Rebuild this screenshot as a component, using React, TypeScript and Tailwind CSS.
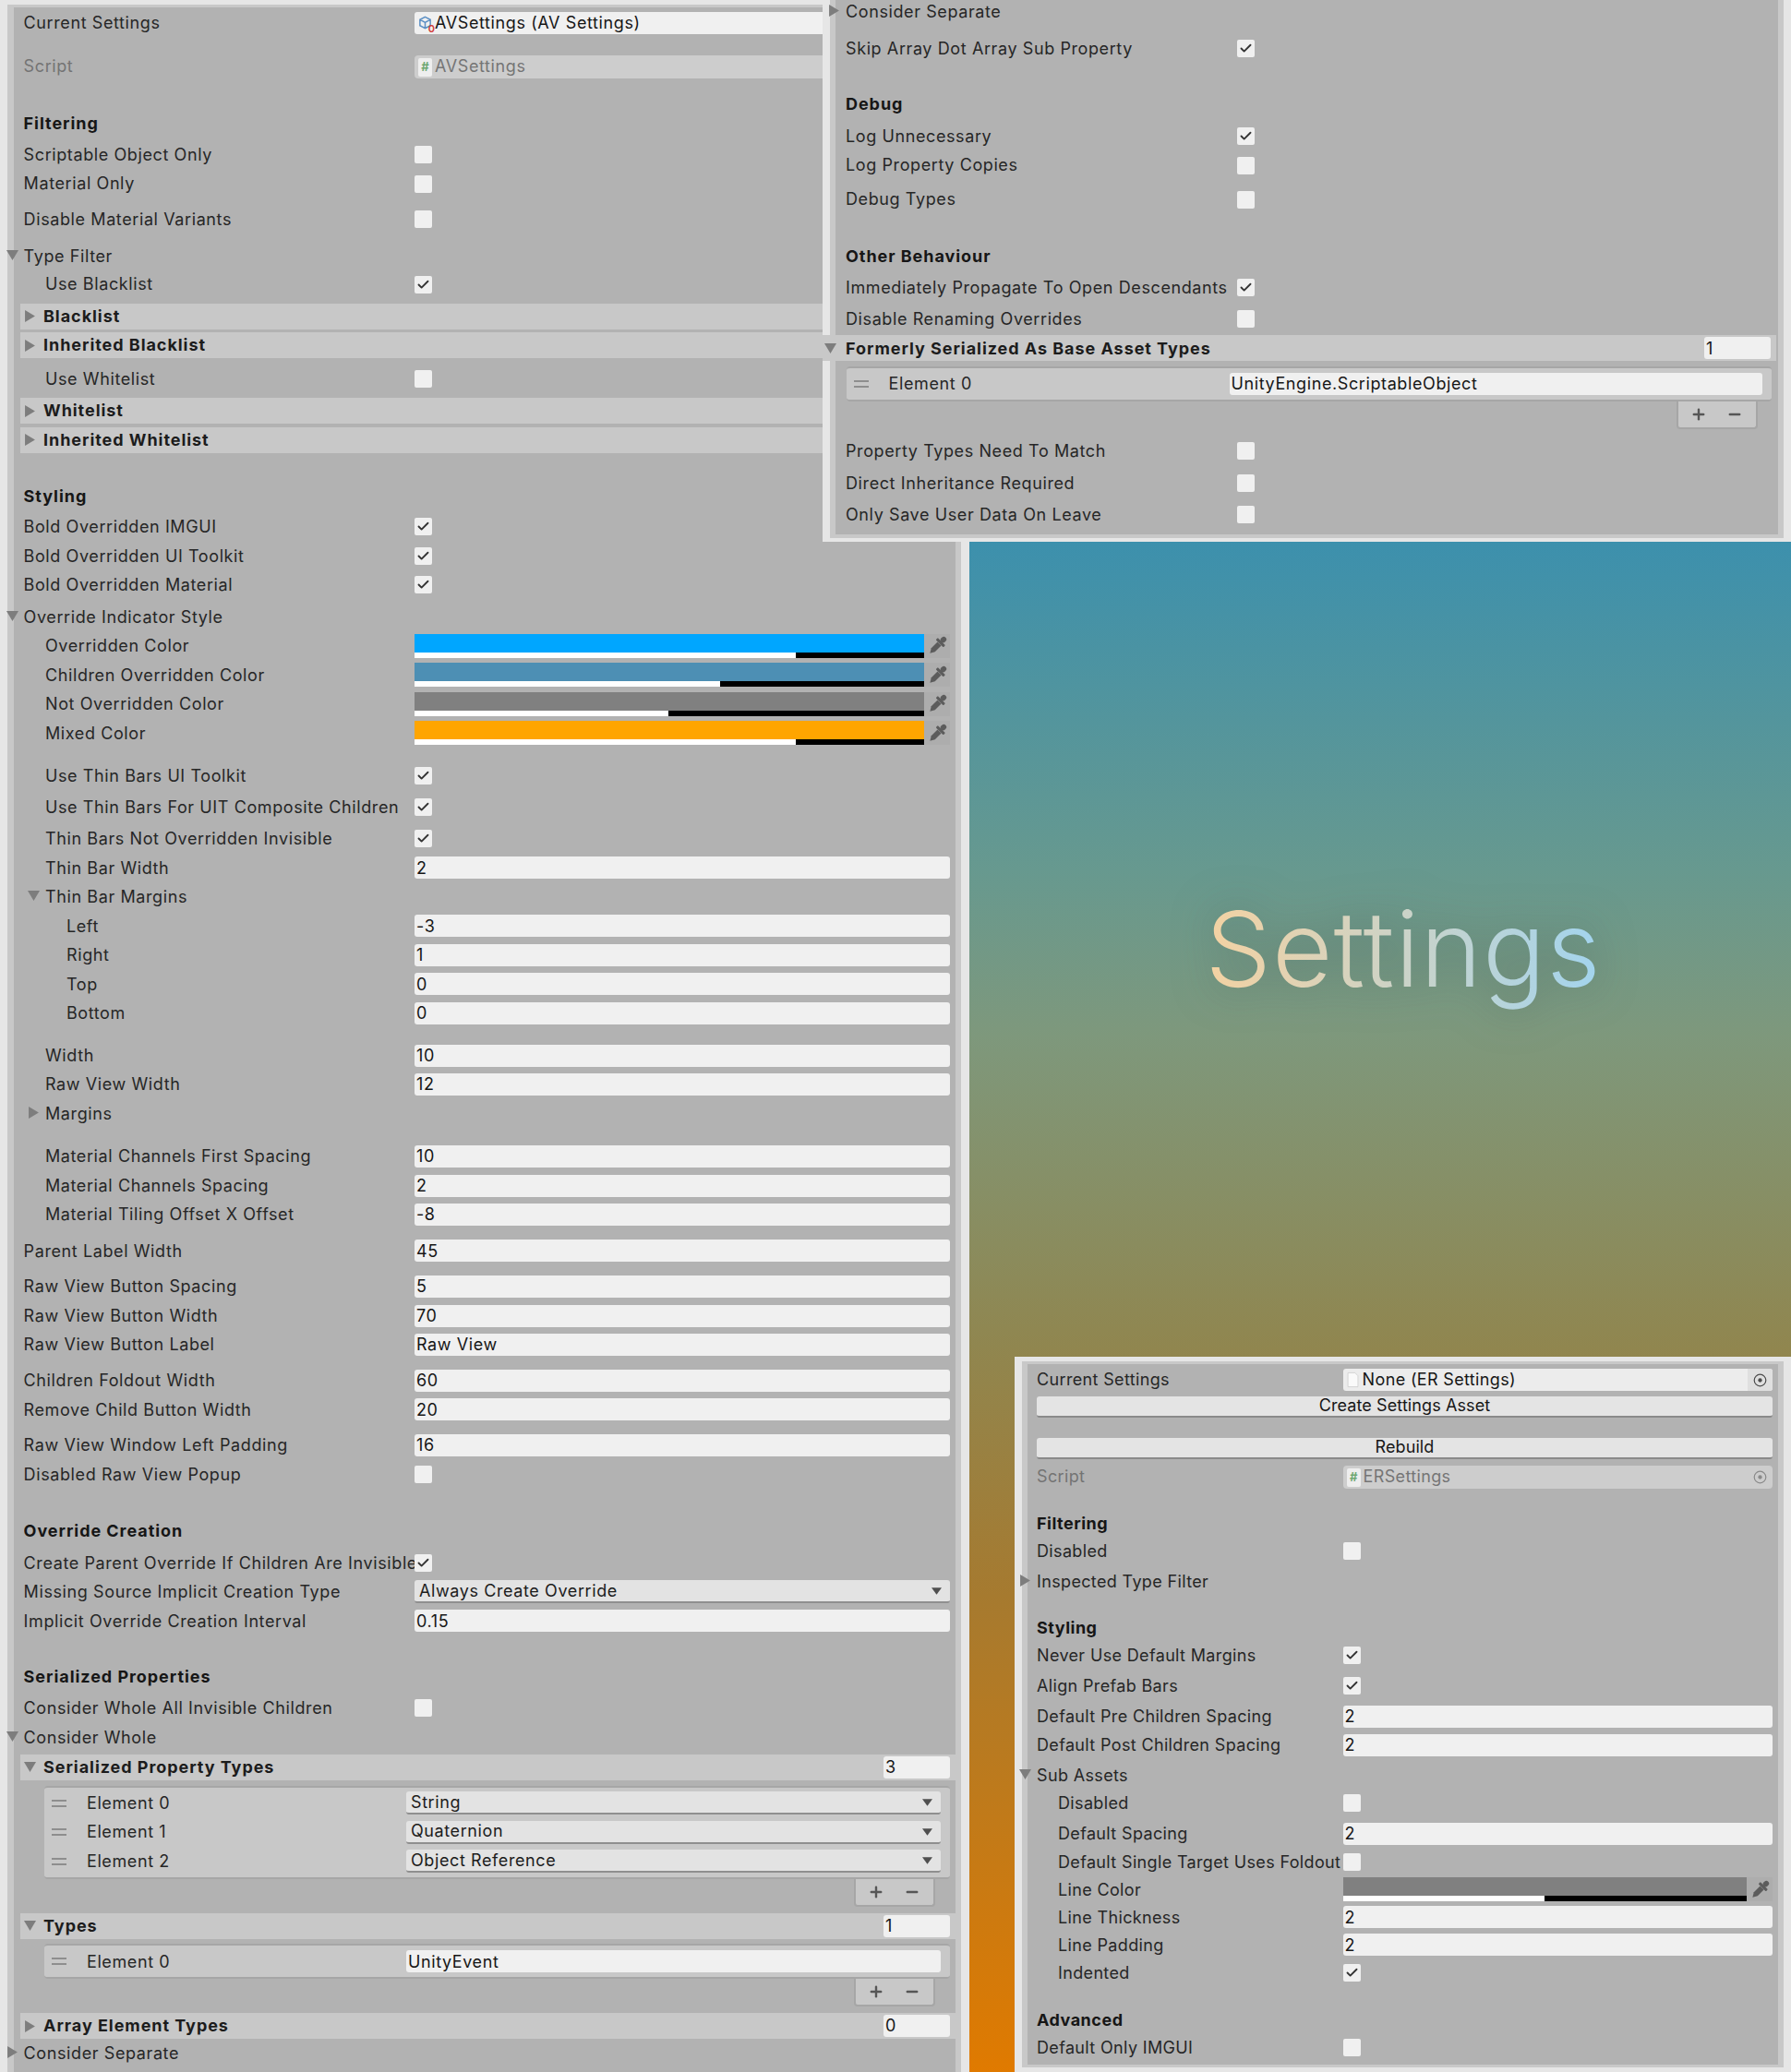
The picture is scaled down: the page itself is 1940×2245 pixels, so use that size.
import type { ReactNode } from "react";
import { Check, Minus, Plus } from "lucide-react";

function Triangle({ open, className = "" }: { open?: boolean; className?: string }) {
  return (
    <svg viewBox="0 0 12 12" className={`h-[13px] w-[13px] shrink-0 fill-[#7d7d7d] ${className}`}>
      {open ? <path d="M0 1h12L6 11z" /> : <path d="M1 0v12l10-6z" />}
    </svg>
  );
}

function Row({ label, indent = "", bold, dim, className = "", children }: { label: ReactNode; indent?: string; bold?: boolean; dim?: boolean; className?: string; children?: ReactNode }) {
  return (
    <div className={`flex h-[30px] shrink-0 items-center ${className}`}>
      <div className={`w-[var(--lw)] shrink-0 overflow-hidden pt-[1px] whitespace-nowrap ${indent} ${bold ? "font-bold tracking-[var(--tb)] text-[#161616]" : dim ? "text-[#747474]" : "text-[#262626]"}`}>
        {label}
      </div>
      <div className="flex min-w-0 flex-1 items-center">{children}</div>
    </div>
  );
}

function Foldout({ label, open, indent = "", className = "" }: { label: string; open?: boolean; indent?: string; className?: string }) {
  return (
    <div className={`flex h-[30px] shrink-0 items-center pt-[1px] text-[#262626] ${indent} ${className}`}>
      <span className="relative whitespace-nowrap">
        <Triangle open={open} className="absolute top-[3px] -left-[19px]" />
        {label}
      </span>
    </div>
  );
}

function Box({ checked }: { checked?: boolean }) {
  return (
    <span className="grid h-[19px] w-[19px] place-items-center rounded-[2px] bg-[#f0f0f0]">
      {checked && <Check className="h-[15px] w-[15px] text-[#333333]" strokeWidth={3} />}
    </span>
  );
}

function Field({ value }: { value: string }) {
  return (
    <div className="flex h-[24px] w-full items-center overflow-hidden rounded-[3px] bg-[#f0f0f0] pt-[1px] pl-[2px] whitespace-nowrap text-[#161616]">
      {value}
    </div>
  );
}

function Drop({ value }: { value: string }) {
  return (
    <div className="flex h-[25px] w-full items-center justify-between rounded-[3px] border-b-2 border-[#8f8f8f] bg-[#e3e3e3] pt-[1px] pr-[9px] pl-[5px] text-[#1c1c1c]">
      {value}
      <svg viewBox="0 0 12 8" className="h-[8px] w-[11px] fill-[#4f4f4f]">
        <path d="M0 0h12L6 8z" />
      </svg>
    </div>
  );
}

function Dropper() {
  return (
    <svg viewBox="0 0 24 24" className="h-[23px] w-[23px] fill-[#5c5c5c]">
      <g transform="rotate(45 12 12)">
        <rect x="9" y="-1" width="6" height="7" rx="3" />
        <rect x="6" y="5.5" width="12" height="3.2" rx="1" />
        <path d="M9 9h6v10l-3 5-3-5z" />
      </g>
    </svg>
  );
}

function ColorField({ color, white }: { color: string; white: string }) {
  return (
    <div className="flex w-full items-center">
      <div className="flex h-[26px] min-w-0 flex-1 flex-col">
        <div className={`h-[20px] ${color}`} />
        <div className="flex h-[6px] bg-black">
          <div className={`bg-white ${white}`} />
        </div>
      </div>
      <div className="grid h-[26px] w-[28px] shrink-0 place-items-center bg-[#adadad]">
        <Dropper />
      </div>
    </div>
  );
}

function HashIcon() {
  return (
    <span className="mr-[3px] grid h-[20px] w-[15px] shrink-0 place-items-center rounded-[2px] bg-[#eeeeee] text-[13px] font-bold tracking-normal text-[#6fa873]">#</span>
  );
}

function Target({ dim }: { dim?: boolean }) {
  return (
    <span className={`grid h-full w-[27px] shrink-0 place-items-center ${dim ? "" : "bg-[#dfdfdf]"}`}>
      <svg viewBox="0 0 16 16" className={`h-[15px] w-[15px] ${dim ? "fill-[#8a8a8a] stroke-[#8a8a8a]" : "fill-[#4c4c4c] stroke-[#4c4c4c]"}`}>
        <circle cx="8" cy="8" r="6.7" fill="none" strokeWidth="1.3" />
        <circle cx="8" cy="8" r="2.3" stroke="none" />
      </svg>
    </span>
  );
}

function ScriptField({ value, target }: { value: string; target?: boolean }) {
  return (
    <div className="flex h-[25px] w-full items-center overflow-hidden rounded-[4px] bg-[#cdcdcd] pt-[1px] pl-[4px] whitespace-nowrap text-[#757575]">
      <HashIcon />
      <span className="flex-1">{value}</span>
      {target && <Target dim />}
    </div>
  );
}

function Header({ label, open, count, indent, className = "" }: { label: string; open?: boolean; count?: string; indent?: boolean; className?: string }) {
  return (
    <div className={`flex h-[30px] shrink-0 items-center ${className}`}>
      <div className={`flex h-[28px] w-full items-center bg-[#c8c8c8] pr-[6px] ${indent ? "pl-[2px]" : "pl-[4px]"}`}>
        <Triangle open={open} />
        <span className={`flex-1 pt-[1px] font-bold tracking-[var(--tb)] whitespace-nowrap text-[#1c1c1c] ${indent ? "ml-[10px]" : "ml-[8px]"}`}>{label}</span>
        {count !== undefined && (
          <div className="w-[72px] shrink-0">
            <Field value={count} />
          </div>
        )}
      </div>
    </div>
  );
}

function ListBox({ labelW, labels, pad, children }: { labelW: string; labels: string[]; pad: string; children: ReactNode[] }) {
  return (
    <div className={`flex flex-col gap-[1.5px] rounded-[4px] border-y-2 border-[#a6a6a6] bg-[#c8c8c8] py-[2px] ${pad}`}>
      {labels.map((label, i) => (
        <div key={i} className="flex h-[30px] items-center">
          <span className="flex h-[8px] w-[16px] shrink-0 flex-col justify-between">
            <span className="h-[2px] bg-[#8e8e8e]" />
            <span className="h-[2px] bg-[#8e8e8e]" />
          </span>
          <span className={`ml-[22px] shrink-0 pt-[1px] text-[#262626] ${labelW}`}>{label}</span>
          <div className="min-w-0 flex-1">{children[i]}</div>
        </div>
      ))}
    </div>
  );
}

function ListFooter({ className = "" }: { className?: string }) {
  return (
    <div className={`-mt-[1.5px] flex h-[30px] w-[88px] items-center gap-[21px] rounded-b-[4px] border-x-2 border-b-2 border-[#a6a6a6] bg-[#c8c8c8] pl-[13px] text-[#565656] ${className}`}>
      <Plus className="h-[18px] w-[18px]" strokeWidth={3.2} />
      <Minus className="h-[18px] w-[18px]" strokeWidth={3.2} />
    </div>
  );
}

function LeftWindow() {
  return (
    <div className="absolute top-0 left-0 flex h-[2245px] w-[1050px] flex-col bg-[#e6e6e6] pt-[5px] pr-[9px] pl-[8px]">
      <div className="flex flex-1 flex-col bg-[#c8c8c8] pt-[3px] pr-[6px] pl-[7px]">
        <div className="flex flex-1 flex-col gap-[1.5px] bg-[#b2b2b2] pt-[2px] pr-[6px] pl-[10.6px] [--lw:423.4px]">
          <Row label="Current Settings">
            <div className="flex h-[24px] w-full items-center overflow-hidden rounded-[3px] bg-[#f0f0f0] pt-[1px] pl-[4px] whitespace-nowrap text-[#161616]">
              <span className="relative mr-[3px] h-[17px] w-[15px] shrink-0">
                <svg viewBox="0 0 16 16" className="h-[15px] w-[15px] fill-none stroke-[#5b8fc4] stroke-[1.6]">
                  <path d="M8 1.5 14 4.5v7L8 14.5 2 11.5v-7zM2 4.5 8 8l6-3.5M8 8v6.5" />
                </svg>
                <span className="absolute right-[-3px] bottom-[-3px] text-[11px] leading-none font-semibold tracking-normal text-[#d23b3b]">0</span>
              </span>
              AVSettings (AV Settings)
            </div>
          </Row>
          <Row label="Script" dim className="mt-[15.5px]"><ScriptField value="AVSettings" /></Row>
          <Row label="Filtering" bold className="mt-[30px]" />
          <Row label="Scriptable Object Only" className="mt-[2.5px]"><Box /></Row>
          <Row label="Material Only"><Box /></Row>
          <Row label="Disable Material Variants" className="mt-[7px]"><Box /></Row>
          <Foldout label="Type Filter" open className="mt-[8.5px]" />
          <Row label="Use Blacklist" indent="pl-[23.4px]" className="-mt-[1px]"><Box checked /></Row>
          <Header label="Blacklist" className="mt-[3px] -mr-[6px] -ml-[3.6px]" />
          <Header label="Inherited Blacklist" className="-mr-[6px] -ml-[3.6px]" />
          <Row label="Use Whitelist" indent="pl-[23.4px]" className="mt-[5px]"><Box /></Row>
          <Header label="Whitelist" className="mt-[3px] -mr-[6px] -ml-[3.6px]" />
          <Header label="Inherited Whitelist" className="-mr-[6px] -ml-[3.6px]" />

          <Row label="Styling" bold className="mt-[29.3px]" />
          <Row label="Bold Overridden IMGUI" className="mt-[2px]"><Box checked /></Row>
          <Row label="Bold Overridden UI Toolkit"><Box checked /></Row>
          <Row label="Bold Overridden Material"><Box checked /></Row>
          <Foldout label="Override Indicator Style" open className="mt-[3px]" />
          <Row label="Overridden Color" indent="pl-[23.4px]"><ColorField color="bg-[#00a6ff]" white="w-[413px]" /></Row>
          <Row label="Children Overridden Color" indent="pl-[23.4px]"><ColorField color="bg-[#4d8fb4]" white="w-[331px]" /></Row>
          <Row label="Not Overridden Color" indent="pl-[23.4px]"><ColorField color="bg-[#808080]" white="w-[275px]" /></Row>
          <Row label="Mixed Color" indent="pl-[23.4px]"><ColorField color="bg-[#ffa500]" white="w-[413px]" /></Row>
          <Row label="Use Thin Bars UI Toolkit" indent="pl-[23.4px]" className="mt-[15px]"><Box checked /></Row>
          <Row label="Use Thin Bars For UIT Composite Children" indent="pl-[23.4px]" className="mt-[2.2px]"><Box checked /></Row>
          <Row label="Thin Bars Not Overridden Invisible" indent="pl-[23.4px]" className="mt-[2.8px]"><Box checked /></Row>
          <Row label="Thin Bar Width" indent="pl-[23.4px]"><Field value="2" /></Row>
          <Foldout label="Thin Bar Margins" open indent="pl-[23.4px]" />
          <Row label="Left" indent="pl-[46.4px]"><Field value="-3" /></Row>
          <Row label="Right" indent="pl-[46.4px]"><Field value="1" /></Row>
          <Row label="Top" indent="pl-[46.4px]"><Field value="0" /></Row>
          <Row label="Bottom" indent="pl-[46.4px]"><Field value="0" /></Row>
          <Row label="Width" indent="pl-[23.4px]" className="mt-[14.3px]"><Field value="10" /></Row>
          <Row label="Raw View Width" indent="pl-[23.4px]"><Field value="12" /></Row>
          <Foldout label="Margins" indent="pl-[23.4px]" />
          <Row label="Material Channels First Spacing" indent="pl-[23.4px]" className="mt-[15px]"><Field value="10" /></Row>
          <Row label="Material Channels Spacing" indent="pl-[23.4px]"><Field value="2" /></Row>
          <Row label="Material Tiling Offset X Offset" indent="pl-[23.4px]"><Field value="-8" /></Row>
          <Row label="Parent Label Width" className="mt-[7.9px]"><Field value="45" /></Row>
          <Row label="Raw View Button Spacing" className="mt-[7.2px]"><Field value="5" /></Row>
          <Row label="Raw View Button Width"><Field value="70" /></Row>
          <Row label="Raw View Button Label"><Field value="Raw View" /></Row>
          <Row label="Children Foldout Width" className="mt-[7.1px]"><Field value="60" /></Row>
          <Row label="Remove Child Button Width"><Field value="20" /></Row>
          <Row label="Raw View Window Left Padding" className="mt-[7.2px]"><Field value="16" /></Row>
          <Row label="Disabled Raw View Popup"><Box /></Row>

          <Row label="Override Creation" bold className="mt-[30px]" />
          <Row label="Create Parent Override If Children Are Invisible" className="mt-[2.9px]"><Box checked /></Row>
          <Row label="Missing Source Implicit Creation Type"><Drop value="Always Create Override" /></Row>
          <Row label="Implicit Override Creation Interval"><Field value="0.15" /></Row>

          <Row label="Serialized Properties" bold className="mt-[28.6px]" />
          <Row label="Consider Whole All Invisible Children" className="mt-[2.9px]"><Box /></Row>
          <Foldout label="Consider Whole" open />
          <Header label="Serialized Property Types" open count="3" className="mt-[1px] -mr-[6px] -ml-[3.6px]" />
          <ListBox labelW="w-[346px]" pad="mt-[3.2px] pr-[10px] pl-[8px] ml-[22.4px]" labels={["Element 0", "Element 1", "Element 2"]}>
            {[<Drop key="0" value="String" />, <Drop key="1" value="Quaternion" />, <Drop key="2" value="Object Reference" />]}
          </ListBox>
          <ListFooter className="ml-[899.4px]" />
          <Header label="Types" open count="1" className="mt-[4.8px] -mr-[6px] -ml-[3.6px]" />
          <ListBox labelW="w-[346px]" pad="mt-[3.2px] pr-[10px] pl-[8px] ml-[22.4px]" labels={["Element 0"]}>
            {[<Field key="0" value="UnityEvent" />]}
          </ListBox>
          <ListFooter className="ml-[899.4px]" />
          <Header label="Array Element Types" count="0" className="mt-[4.2px] -mr-[6px] -ml-[3.6px]" />
          <Foldout label="Consider Separate" className="-mt-[1.5px]" />
        </div>
      </div>
    </div>
  );
}

function TopRightWindow() {
  return (
    <div className="absolute top-0 left-[891px] flex h-[587px] w-[1049px] flex-col bg-[#e6e6e6] pr-[8px] pb-[4px] pl-[8px]">
      <div className="flex flex-1 flex-col bg-[#c8c8c8] pr-[6px] pb-[4px] pl-[6px]">
        <div className="flex flex-1 flex-col gap-[1.5px] bg-[#b2b2b2] pr-[7px] pl-[11px] [--lw:424px]">
          <Foldout label="Consider Separate" className="-mt-[2.3px]" />
          <Row label="Skip Array Dot Array Sub Property" className="mt-[8.5px]"><Box checked /></Row>
          <Row label="Debug" bold className="mt-[28.8px]" />
          <Row label="Log Unnecessary" className="mt-[3px]"><Box checked /></Row>
          <Row label="Log Property Copies"><Box /></Row>
          <Row label="Debug Types" className="mt-[5.7px]"><Box /></Row>
          <Row label="Other Behaviour" bold className="mt-[30px]" />
          <Row label="Immediately Propagate To Open Descendants" className="mt-[2.8px]"><Box checked /></Row>
          <Row label="Disable Renaming Overrides" className="mt-[2.5px]"><Box /></Row>
          <div className="relative z-10 -mr-[5px] -ml-[25px]">
            <Header label="Formerly Serialized As Base Asset Types" open count="1" indent />
          </div>
          <ListBox labelW="w-[369px]" pad="mt-[2.8px] pr-[10px] pl-[8px] ml-[0.6px]" labels={["Element 0"]}>
            {[<Field key="0" value="UnityEngine.ScriptableObject" />]}
          </ListBox>
          <ListFooter className="ml-[900px]" />
          <Row label="Property Types Need To Match" className="mt-[7.5px]"><Box /></Row>
          <Row label="Direct Inheritance Required" className="mt-[3.2px]"><Box /></Row>
          <Row label="Only Save User Data On Leave" className="mt-[2.8px]"><Box /></Row>
        </div>
      </div>
    </div>
  );
}

function UnityButton({ label, className = "" }: { label: string; className?: string }) {
  return (
    <div className={`flex h-[23px] shrink-0 items-center justify-center rounded-[3px] border-b-2 border-[#8a8a8a] bg-[#e4e4e4] tracking-[0.1px] text-[#161616] ${className}`}>
      {label}
    </div>
  );
}

function BottomRightWindow() {
  return (
    <div className="absolute top-[1470px] left-[1099px] flex h-[775px] w-[841px] flex-col bg-[#e6e6e6] pt-[5px] pr-[8px] pb-[5px] pl-[8px] tracking-[0.35px] [--tb:0.5px]">
      <div className="flex flex-1 flex-col bg-[#c8c8c8] pt-[3px] pr-[6px] pb-[3px] pl-[6px]">
        <div className="flex flex-1 flex-col bg-[#b2b2b2] pt-[2px] pr-[6px] pl-[10px] [--lw:331.6px]">
          <Row label="Current Settings">
            <div className="flex h-[24px] w-full items-center overflow-hidden rounded-[3px] bg-[#ececec] pl-[4px] text-[#161616]">
              <svg viewBox="0 0 12 16" className="mr-[4px] h-[18px] w-[13px] fill-[#fafafa] stroke-[#c4c4c4] stroke-[0.6]">
                <path d="M1 1h7l3 3v11H1z" />
              </svg>
              <span className="flex-1 pt-[1px]">None (ER Settings)</span>
              <Target />
            </div>
          </Row>
          <UnityButton label="Create Settings Asset" className="mt-[3px]" />
          <UnityButton label="Rebuild" className="mt-[22px]" />
          <Row label="Script" dim className="mt-[4px]"><ScriptField value="ERSettings" target /></Row>
          <Row label="Filtering" bold className="mt-[20.7px]" />
          <Row label="Disabled"><Box /></Row>
          <Foldout label="Inspected Type Filter" className="mt-[3.3px]" />
          <Row label="Styling" bold className="mt-[19.8px]" />
          <Row label="Never Use Default Margins"><Box checked /></Row>
          <Row label="Align Prefab Bars" className="mt-[3px]"><Box checked /></Row>
          <Row label="Default Pre Children Spacing" className="mt-[3px]"><Field value="2" /></Row>
          <Row label="Default Post Children Spacing" className="mt-[1px]"><Field value="2" /></Row>
          <Foldout label="Sub Assets" open className="mt-[3px]" />
          <Row label="Disabled" indent="pl-[23px]"><Box /></Row>
          <Row label="Default Spacing" indent="pl-[23px]" className="mt-[3px]"><Field value="2" /></Row>
          <Row label="Default Single Target Uses Foldout" indent="pl-[23px]" className="mt-[0.7px]"><Box /></Row>
          <Row label="Line Color" indent="pl-[23px]"><ColorField color="bg-[#808080]" white="w-[218px]" /></Row>
          <Row label="Line Thickness" indent="pl-[23px]"><Field value="2" /></Row>
          <Row label="Line Padding" indent="pl-[23px]"><Field value="2" /></Row>
          <Row label="Indented" indent="pl-[23px]"><Box checked /></Row>
          <Row label="Advanced" bold className="mt-[21px]" />
          <Row label="Default Only IMGUI"><Box /></Row>
        </div>
      </div>
    </div>
  );
}

export default function App() {
  return (
    <div className="relative h-[2245px] w-[1940px] overflow-hidden bg-[linear-gradient(180deg,#3c90ad_26%,#67998f_42%,#7e987c_50%,#90864f_65%,#a67a2f_77%,#e07a00_100%)] text-[18px] leading-[1.25] tracking-[0.6px] [--tb:0.95px] [font-family:Inter,'Liberation_Sans',sans-serif]">
      <div className="absolute top-[953px] left-[1290px] w-[460px] text-center text-[113px] leading-[150px] font-[350] tracking-[1px] [filter:drop-shadow(0_0_22px_rgba(70,90,85,0.55))]">
        <span className="bg-[linear-gradient(90deg,#f4d2a2,#a2d4ee)] bg-clip-text text-transparent">Settings</span>
      </div>
      <LeftWindow />
      <TopRightWindow />
      <BottomRightWindow />
    </div>
  );
}
